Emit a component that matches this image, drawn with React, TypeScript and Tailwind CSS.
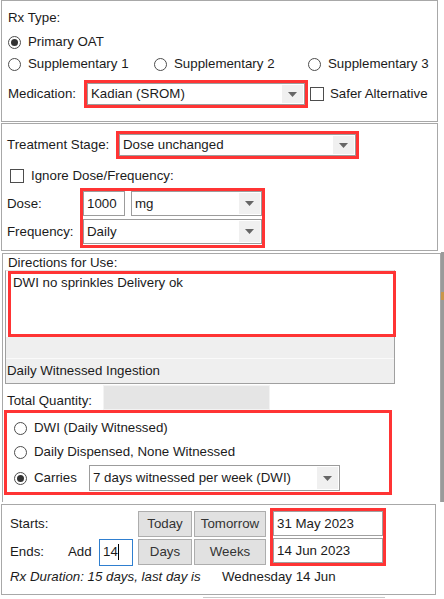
import React from 'react';

const RED = 'border-[3px] border-[#ff3434]';

function Radio({ checked = false }: { checked?: boolean }) {
  return (
    <span className="w-[13px] h-[13px] shrink-0 rounded-full border border-[#4d4d4d] bg-white flex items-center justify-center">
      {checked && <span className="w-[7px] h-[7px] rounded-full bg-[#333]" />}
    </span>
  );
}

function Checkbox({ className = '' }: { className?: string }) {
  return <span className={`block w-[14px] h-[14px] shrink-0 border border-[#4d4d4d] bg-white ${className}`} />;
}

function Select({ text, className = '' }: { text: string; className?: string }) {
  return (
    <div className={`flex items-stretch bg-white border border-[#9c9c9c] ${className}`}>
      <span className="flex-1 flex items-center pl-[3px] whitespace-nowrap overflow-hidden">{text}</span>
      <span className="w-[21px] m-px bg-[#f0f0f0] flex items-center justify-center">
        <svg width="9" height="5" viewBox="0 0 9 5">
          <path d="M0 0H9L4.5 5Z" fill="#666" />
        </svg>
      </span>
    </div>
  );
}

function Button({ label, className = '' }: { label: string; className?: string }) {
  return (
    <div className={`h-full flex items-center justify-center bg-[#e1e1e1] border border-[#adadad] text-[#333] ${className}`}>
      {label}
    </div>
  );
}

export default function App() {
  return (
    <div className="w-[444px] h-[599px] bg-white overflow-hidden flex font-['Liberation_Sans',Arial,sans-serif] text-[13.3px] text-[#1b1b1b]">
      <div className="w-[441px] flex flex-col">
        {/* Rx type */}
        <section className="ml-px w-[437px] h-[122px] border border-[#a8a8a8] pl-[6px]">
          <div className="mt-[9px] h-[16px] leading-[16px]">Rx Type:</div>
          <div className="mt-[8px] h-[16px] flex items-center gap-[7px]">
            <Radio checked />
            Primary OAT
          </div>
          <div className="mt-[6px] h-[16px] flex items-center whitespace-nowrap">
            <div className="w-[146px] flex items-center gap-[7px]">
              <Radio />
              Supplementary 1
            </div>
            <div className="w-[154px] flex items-center gap-[7px]">
              <Radio />
              Supplementary 2
            </div>
            <div className="flex items-center gap-[7px]">
              <Radio />
              Supplementary 3
            </div>
          </div>
          <div className="mt-[8px] h-[28px] flex items-center">
            <span className="w-[76px] shrink-0">Medication:</span>
            <div className={`w-[224px] h-[28px] shrink-0 ${RED} flex`}>
              <Select text="Kadian (SROM)" className="flex-1" />
            </div>
            <Checkbox className="ml-[2px] mr-[6px]" />
            <span className="whitespace-nowrap">Safer Alternative</span>
          </div>
        </section>

        {/* Treatment */}
        <section className="mt-px ml-px w-[437px] h-[128px] border border-[#a8a8a8] pl-[5px]">
          <div className="mt-[7px] h-[28px] flex items-center">
            <span className="w-[109px]">Treatment Stage:</span>
            <div className={`w-[243px] h-[28px] ${RED} flex`}>
              <Select text="Dose unchanged" className="flex-1" />
            </div>
          </div>
          <div className="mt-[9px] h-[16px] flex items-center gap-[7px] pl-[3px]">
            <Checkbox />
            Ignore Dose/Frequency:
          </div>
          <div className="mt-[4px] flex">
            <div className="w-[73px] pt-[3px] flex flex-col gap-[3px]">
              <span className="h-[25px] flex items-center">Dose:</span>
              <span className="h-[25px] flex items-center">Frequency:</span>
            </div>
            <div className={`w-[185px] h-[60px] ${RED} flex flex-col gap-[3px]`}>
              <div className="h-[25px] flex gap-[6px]">
                <div className="w-[42px] bg-white border border-[#9c9c9c] flex items-center pl-[3px]">1000</div>
                <Select text="mg" className="flex-1" />
              </div>
              <Select text="Daily" className="h-[25px]" />
            </div>
          </div>
        </section>

        {/* Directions */}
        <section className="mt-[2px] ml-[2px] w-[439px] h-[249px] border border-[#a8a8a8] border-b-0 pl-px">
          <div className="mt-px h-[15px] leading-[15px] pl-[4px]">Directions for Use:</div>
          <div className="ml-px w-[390px] h-[114px] border border-[#a0a0a0] border-t-[#e2e2e2] flex flex-col">
            <div className={`ml-[2px] w-[388px] h-[66px] ${RED} pl-[2px] leading-[16px] pt-[1px]`}>
              DWI no sprinkles Delivery ok
            </div>
            <div className="h-[21px] bg-[#efefef]" />
            <div className="h-px bg-[#fafafa]" />
            <div className="flex-1 bg-[#efefef] flex items-center pl-px">Daily Witnessed Ingestion</div>
          </div>
          <div className="h-[26px] flex">
            <span className="w-[99px] pl-[3px] self-end leading-[18px]">Total Quantity:</span>
            <div className="w-[167px] h-[25px] mt-px bg-[#e5e5e5] border border-[#f3f3f3]" />
          </div>
          <div className={`w-[388px] h-[85px] ${RED} pl-[7px]`}>
            <div className="mt-[7px] h-[16px] flex items-center gap-[7px]">
              <Radio />
              DWI (Daily Witnessed)
            </div>
            <div className="mt-[8px] h-[16px] flex items-center gap-[7px]">
              <Radio />
              Daily Dispensed, None Witnessed
            </div>
            <div className="mt-[5px] h-[26px] flex items-center gap-[7px]">
              <Radio checked />
              <span className="w-[48px]">Carries</span>
              <Select text="7 days witnessed per week (DWI)" className="w-[251px] h-[26px]" />
            </div>
          </div>
        </section>

        {/* Dates */}
        <section className="mt-[2px] ml-px w-[435px] h-[91px] border border-[#a8a8a8] pl-[8px]">
          <div className="flex">
            <div className="w-[259px] flex flex-col">
              <div className="mt-[6px] h-[26px] flex items-center">
                <span className="w-[128px]">Starts:</span>
                <Button label="Today" className="w-[54px]" />
                <Button label="Tomorrow" className="w-[72px] ml-[2px]" />
              </div>
              <div className="mt-[2px] h-[26px] flex items-center">
                <span className="w-[58px]">Ends:</span>
                <span className="w-[31px]">Add</span>
                <div className="w-[34px] h-[27px] border border-[#2f7fd0] bg-white flex items-center pl-[3px]">
                  14<span className="w-px h-[16px] bg-black" />
                </div>
                <Button label="Days" className="w-[54px] ml-[5px]" />
                <Button label="Weeks" className="w-[72px] ml-[2px]" />
              </div>
            </div>
            <div className={`ml-px mt-[3px] w-[116px] h-[58px] ${RED} flex flex-col gap-[2px]`}>
              <div className="h-[25px] border border-[#a0a0a0] bg-white flex items-center pl-[3px]">31 May 2023</div>
              <div className="h-[25px] border border-[#a0a0a0] bg-white flex items-center pl-[3px]">14 Jun 2023</div>
            </div>
          </div>
          <div className="mt-[3px] h-[16px] flex items-center">
            <span className="w-[212px] italic">Rx Duration: 15 days, last day is</span>
            <span>Wednesday 14 Jun</span>
          </div>
        </section>
        <div className="mt-[2px] ml-[203px] w-[182px] h-px bg-[#c8c8c8]" />
      </div>
      <div className="w-[3px] flex flex-col">
        <div className="mt-[252px] h-[250px] bg-[#9a9a9a] flex flex-col">
          <div className="mt-[40px] h-[8px] bg-[#c9954a]" />
        </div>
      </div>
    </div>
  );
}
